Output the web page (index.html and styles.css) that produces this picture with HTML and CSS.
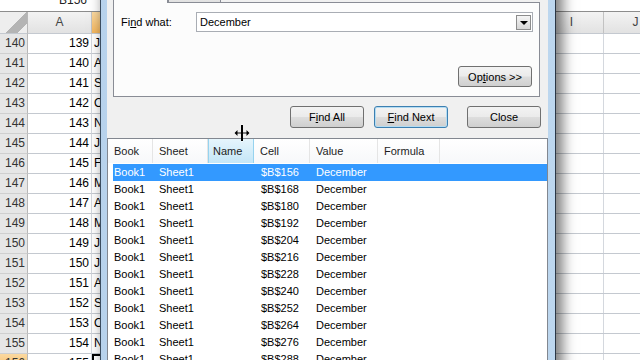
FILE: index.html
```html
<!DOCTYPE html>
<html lang="en">
<head>
    <meta charset="UTF-8">
    <title>Find and Replace</title>
    <link rel="stylesheet" href="styles.css">
</head>
<body>
    <!-- Worksheet behind the dialog -->
    <div class="sheet">
        <div class="namebar"><span class="namebox">B156</span></div>
        <div class="grid">
            <span class="corner"></span>
            <span class="ch">A</span>
            <span class="ch sel">B</span>
            <span class="ch">C</span>
            <span class="ch">D</span>
            <span class="ch">E</span>
            <span class="ch">F</span>
            <span class="ch">G</span>
            <span class="ch">H</span>
            <span class="ch">I</span>
            <span class="ch">J</span>
        </div>
        <div class="grid row"><span class="rh">140</span><span class="c num">139</span><span class="c">July</span><span class="rest"></span></div>
        <div class="grid row"><span class="rh">141</span><span class="c num">140</span><span class="c">August</span><span class="rest"></span></div>
        <div class="grid row"><span class="rh">142</span><span class="c num">141</span><span class="c">September</span><span class="rest"></span></div>
        <div class="grid row"><span class="rh">143</span><span class="c num">142</span><span class="c">October</span><span class="rest"></span></div>
        <div class="grid row"><span class="rh">144</span><span class="c num">143</span><span class="c">November</span><span class="rest"></span></div>
        <div class="grid row"><span class="rh">145</span><span class="c num">144</span><span class="c">January</span><span class="rest"></span></div>
        <div class="grid row"><span class="rh">146</span><span class="c num">145</span><span class="c">February</span><span class="rest"></span></div>
        <div class="grid row"><span class="rh">147</span><span class="c num">146</span><span class="c">March</span><span class="rest"></span></div>
        <div class="grid row"><span class="rh">148</span><span class="c num">147</span><span class="c">April</span><span class="rest"></span></div>
        <div class="grid row"><span class="rh">149</span><span class="c num">148</span><span class="c">May</span><span class="rest"></span></div>
        <div class="grid row"><span class="rh">150</span><span class="c num">149</span><span class="c">June</span><span class="rest"></span></div>
        <div class="grid row"><span class="rh">151</span><span class="c num">150</span><span class="c">July</span><span class="rest"></span></div>
        <div class="grid row"><span class="rh">152</span><span class="c num">151</span><span class="c">August</span><span class="rest"></span></div>
        <div class="grid row"><span class="rh">153</span><span class="c num">152</span><span class="c">September</span><span class="rest"></span></div>
        <div class="grid row"><span class="rh">154</span><span class="c num">153</span><span class="c">October</span><span class="rest"></span></div>
        <div class="grid row"><span class="rh">155</span><span class="c num">154</span><span class="c">November</span><span class="rest"></span></div>
        <div class="grid row"><span class="rh sel">156</span><span class="c num">155</span><span class="c active">December</span><span class="rest"></span></div>
    </div>

    <!-- Find and Replace dialog -->
    <div class="dialog">
        <div class="client">
            <div class="tabs">
                <span class="tab active">Find</span>
                <span class="tab">Replace</span>
            </div>
            <div class="panel">
                <div class="find-row">
                    <label>Fi<u>n</u>d what:</label>
                    <div class="combo">
                        <span class="combo-text">December</span>
                        <span class="drop"></span>
                    </div>
                </div>
                <div class="options-row">
                    <button class="btn">Op<u>t</u>ions &gt;&gt;</button>
                </div>
            </div>

            <div class="actions">
                <button class="btn">F<u>i</u>nd All</button>
                <button class="btn focus"><u>F</u>ind Next</button>
                <button class="btn close">Close</button>
            </div>

            <div class="results">
                <div class="results-head">
                    <span>Book</span>
                    <span>Sheet</span>
                    <span class="hover">Name</span>
                    <span>Cell</span>
                    <span>Value</span>
                    <span>Formula</span>
                    <span class="filler"></span>
                </div>
                <div class="item selected"><span>Book1</span><span>Sheet1</span><span></span><span>$B$156</span><span>December</span><span></span></div>
                <div class="item"><span>Book1</span><span>Sheet1</span><span></span><span>$B$168</span><span>December</span><span></span></div>
                <div class="item"><span>Book1</span><span>Sheet1</span><span></span><span>$B$180</span><span>December</span><span></span></div>
                <div class="item"><span>Book1</span><span>Sheet1</span><span></span><span>$B$192</span><span>December</span><span></span></div>
                <div class="item"><span>Book1</span><span>Sheet1</span><span></span><span>$B$204</span><span>December</span><span></span></div>
                <div class="item"><span>Book1</span><span>Sheet1</span><span></span><span>$B$216</span><span>December</span><span></span></div>
                <div class="item"><span>Book1</span><span>Sheet1</span><span></span><span>$B$228</span><span>December</span><span></span></div>
                <div class="item"><span>Book1</span><span>Sheet1</span><span></span><span>$B$240</span><span>December</span><span></span></div>
                <div class="item"><span>Book1</span><span>Sheet1</span><span></span><span>$B$252</span><span>December</span><span></span></div>
                <div class="item"><span>Book1</span><span>Sheet1</span><span></span><span>$B$264</span><span>December</span><span></span></div>
                <div class="item"><span>Book1</span><span>Sheet1</span><span></span><span>$B$276</span><span>December</span><span></span></div>
                <div class="item"><span>Book1</span><span>Sheet1</span><span></span><span>$B$288</span><span>December</span><span></span></div>
            </div>
        </div>
    </div>

    <!-- column resize mouse cursor -->
    <svg class="cursor" width="20" height="20" viewBox="0 0 20 20">
        <path d="M9 1.5h2v7.5h3.5V6.5l3.5 3.5-3.5 3.5V11H11v7.5H9V11H5.5v2.5L2 10l3.5-3.5V9H9z" fill="#fff"/>
        <path d="M9.5 2h1v16h-1z M2.5 10l3-3v2.6h9V7l3 3-3 3v-2.6h-9V13z" fill="#000"/>
        <path d="M9 2h2v16H9z" fill="#000"/>
    </svg>
</body>
</html>
```

FILE: styles.css
```css
body {
    margin: 0;
    width: 640px;
    height: 360px;
    overflow: hidden;
    position: relative;
    background: #fff;
    font-family: "Liberation Sans", Arial, sans-serif;
}

/* worksheet */
.sheet {
    font-size: 12px;
    color: #000;
}
.namebar {
    height: 11px;
    border-bottom: 1px solid #8d8d8d;
    overflow: hidden;
}
.namebox {
    display: block;
    margin: -7px 0 0 59px;
    line-height: 14px;
    font-size: 12px;
    color: #222;
}
.grid {
    display: grid;
    grid-template-columns: 28px repeat(10, 64px);
    height: 22px;
}
.grid > span {
    box-sizing: border-box;
    border-right: 1px solid #d4d8de;
    border-bottom: 1px solid #c4c9d0;
    white-space: nowrap;
    overflow: hidden;
}
.corner {
    background: linear-gradient(135deg, #eeeeee 55%, #b4b4b4 56%, #b4b4b4 80%, #eeeeee 81%);
    border-right-color: #b8b8b8 !important;
}
.ch {
    background: linear-gradient(#f3f3f3, #e2e2e2);
    color: #444;
    text-align: center;
    line-height: 21px;
    border-right-color: #c2c2c2 !important;
}
.ch.sel {
    background: linear-gradient(#fbd9a0, #f5b75e);
}
.row {
    height: 20px;
}
.rh {
    background: #e6e6e6;
    color: #333;
    padding-left: 5px;
    line-height: 19px;
    border-right-color: #b8b8b8 !important;
    border-bottom-color: #cfcfcf !important;
}
.rh.sel {
    background: linear-gradient(#fbd9a0, #f5b75e);
}
.c {
    line-height: 19px;
    padding: 0 2px;
}
.c.num {
    text-align: right;
}
.c.active {
    border-top: 2px solid #000;
    border-left: 2px solid #000;
}
.rest {
    grid-column: span 8;
    border-right: none !important;
    background: repeating-linear-gradient(90deg, transparent 0 63px, #d4d8de 63px 64px);
}

/* dialog window */
.dialog {
    position: absolute;
    left: 100px;
    top: -22px;
    height: 420px;
    border-left: 1px solid #3b4d60;
    border-right: 1px solid #2a3644;
    padding: 0 7px 0 6px;
    background: linear-gradient(90deg, #b7d2ec, #d5e7f7 40%, #bcd6ee);
    box-shadow: 5px 0 12px 2px rgba(0, 0, 0, 0.5);
}
.client {
    width: 441px;
    height: 100%;
    background: #f0f0f0;
    font-size: 11px;
    color: #000;
}
.tabs {
    display: flex;
    align-items: flex-end;
    height: 24px;
    padding-left: 6px;
}
.tab {
    box-sizing: border-box;
    height: 20px;
    width: 53px;
    padding: 3px 6px;
    border: 1px solid #898c95;
    border-bottom: none;
    background: linear-gradient(#f2f2f2, #e1e1e1);
}
.tab.active {
    width: 55px;
    height: 24px;
    background: #fcfcfc;
    margin-bottom: -1px;
    position: relative;
}
.panel {
    margin: 0 8px 0 6px;
    border: 1px solid #898c95;
    background: #fcfcfc;
    padding: 9px 6px 9px 7px;
}
.find-row {
    display: flex;
    align-items: center;
    height: 20px;
}
.find-row label {
    width: 75px;
}
.combo {
    flex: 1;
    height: 20px;
    box-sizing: border-box;
    border: 1px solid #a9adb4;
    background: #fff;
    display: flex;
    align-items: center;
    justify-content: space-between;
    padding: 0 1px 0 3px;
}
.drop {
    width: 15px;
    height: 15px;
    box-sizing: border-box;
    border: 1px solid #8c8c8c;
    background: linear-gradient(#f5f5f5, #d6d6d6);
    position: relative;
}
.drop::after {
    content: "";
    position: absolute;
    left: 3px;
    top: 5px;
    border-left: 4px solid transparent;
    border-right: 4px solid transparent;
    border-top: 4px solid #000;
}
.options-row {
    display: flex;
    justify-content: flex-end;
    margin-top: 34px;
    padding-right: 1px;
}
.btn {
    width: 74px;
    height: 21px;
    box-sizing: border-box;
    border: 1px solid #707070;
    border-radius: 3px;
    background: linear-gradient(#f3f3f3 0%, #ebebeb 48%, #dddddd 52%, #cfcfcf 100%);
    font-family: "Liberation Sans", Arial, sans-serif;
    font-size: 11px;
    color: #000;
    padding: 0;
}
.btn.focus {
    border-color: #3c7fb1;
    box-shadow: inset 0 0 0 1px #b4dcf2;
}
.btn.close {
    margin-left: 9px;
}
.actions {
    display: flex;
    justify-content: flex-end;
    gap: 10px;
    margin-top: 9px;
    padding-right: 7px;
}
.actions .btn {
    height: 22px;
}

/* results list */
.results {
    margin-top: 10px;
    border: 1px solid #828790;
    background: #fff;
    height: 300px;
}
.results-head {
    display: grid;
    grid-template-columns: 45px 55px 46px 56px 68px 62px 1fr;
    height: 24px;
    background: linear-gradient(#ffffff, #f7f8fa);
}
.results-head span {
    border-right: 1px solid #e5e5e5;
    padding-left: 6px;
    line-height: 24px;
    color: #1d1d1d;
}
.results-head .hover {
    padding-left: 4px;
    background: linear-gradient(#e6f5fc, #c4e6f7);
    border-left: 1px solid #96d3ef;
    border-right: 1px solid #96d3ef;
}
.results-head .filler {
    border-right: none;
}
.item {
    display: grid;
    grid-template-columns: 40px 55px 46px 56px 68px 1fr;
    height: 17px;
    line-height: 17px;
    margin-left: 5px;
    white-space: nowrap;
}
.item span {
    padding-left: 6px;
}
.item span:first-child {
    padding-left: 1px;
}
.item span:nth-child(4) {
    padding-left: 7px;
}
.item.selected {
    margin-top: 1px;
    background: #3399ff;
    color: #fff;
}

.cursor {
    position: absolute;
    left: 232px;
    top: 123px;
}
```
